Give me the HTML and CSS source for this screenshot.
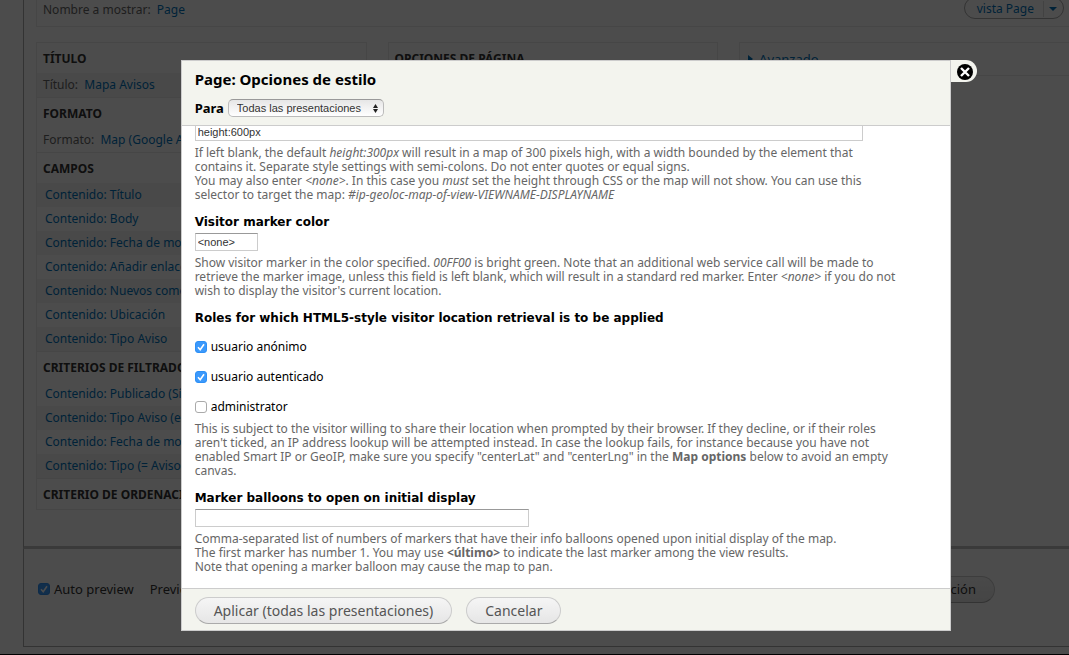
FILE: index.html
```html
<!DOCTYPE html>
<html lang="es">
<head>
<meta charset="utf-8">
<meta name="viewport" content="width=device-width, initial-scale=1">
<title>Page: Opciones de estilo</title>
<link rel="stylesheet" href="styles.css">
</head>
<body>
<main class="page">
  <div class="view-edit">
    <section class="display-top">
      <div>Nombre a mostrar: &nbsp;<a href="#">Page</a></div>
      <div class="dropbutton">
        <a href="#">vista Page</a>
        <button type="button" aria-label="Más acciones"><svg width="8" height="4" viewBox="0 0 8 4"><path d="M0 0h8L4 4z" fill="currentColor"/></svg></button>
      </div>
    </section>
    <div class="columns">
      <div class="column">
        <section class="bucket"><h3>Título</h3>
          <div class="row shaded">Título: &nbsp;<a href="#">Mapa Avisos</a></div></section>
        <section class="bucket"><h3>Formato</h3>
          <div class="row">Formato: &nbsp;<a href="#">Map (Google API)</a></div></section>
        <section class="bucket striped-odd"><h3>Campos</h3>
          <a class="row item" href="#">Contenido: Título</a>
          <a class="row item shaded" href="#">Contenido: Body</a>
          <a class="row item" href="#">Contenido: Fecha de modificación</a>
          <a class="row item shaded" href="#">Contenido: Añadir enlace</a>
          <a class="row item" href="#">Contenido: Nuevos comentarios</a>
          <a class="row item shaded" href="#">Contenido: Ubicación</a>
          <a class="row item" href="#">Contenido: Tipo Aviso</a></section>
        <section class="bucket"><h3>Criterios de filtrado</h3>
          <a class="row item" href="#">Contenido: Publicado (Sí)</a>
          <a class="row item shaded" href="#">Contenido: Tipo Aviso (expuesto)</a>
          <a class="row item" href="#">Contenido: Fecha de modificación</a>
          <a class="row item shaded" href="#">Contenido: Tipo (= Aviso)</a></section>
        <section class="bucket"><h3>Criterio de ordenación</h3></section>
      </div>
      <div class="column"><section class="bucket"><h3>Opciones de página</h3></section></div>
      <div class="column column-last"><a class="advanced" href="#"><svg width="5" height="8" viewBox="0 0 5 8"><path d="M0 0v8l5-4z" fill="currentColor"/></svg>Avanzado</a></div>
    </div>
  </div>
  <div class="preview">
    <label class="auto"><input class="tick" type="checkbox" checked>Auto preview</label>
    <span class="preview-text">Preview with contextual filters:</span>
    <button class="button small" type="button">Actualizar previsualización</button>
  </div>
</main>
<div class="overlay"></div>
<div class="dialog" role="dialog" aria-labelledby="dialog-title">
  <button class="close" type="button" aria-label="Cerrar"><svg width="16" height="16" viewBox="0 0 16 16"><circle cx="8" cy="8" r="8" fill="#000"/><path d="M4 4l8 8M12 4l-8 8" stroke="#fff" stroke-width="2.400"/></svg></button>
  <header class="dialog-head">
    <h1 id="dialog-title">Page: Opciones de estilo</h1>
    <div class="for"><label for="para">Para</label>
      <span class="select"><select id="para"><option>Todas las presentaciones</option></select><svg width="5" height="9" viewBox="0 0 5 9"><path d="M0 4h5L2.500 0zM0 5h5L2.500 9z" fill="#222"/></svg></span></div>
  </header>
  <div class="dialog-body">
    <div class="scrolled">
      <input class="text wide" type="text" value="height:600px" aria-label="Map style">
      <p>If left blank, the default <em>height:300px</em> will result in a map of 300 pixels high, with a width bounded by the element that<br>contains it. Separate style settings with semi-colons. Do not enter quotes or equal signs.<br>You may also enter <em>&lt;none&gt;</em>. In this case you <em>must</em> set the height through CSS or the map will not show. You can use this<br>selector to target the map: <em>#ip-geoloc-map-of-view-VIEWNAME-DISPLAYNAME</em></p>
      <label class="title" for="color">Visitor marker color</label>
      <input class="text short" id="color" type="text" value="&lt;none&gt;">
      <p>Show visitor marker in the color specified. <em>00FF00</em> is bright green. Note that an additional web service call will be made to<br>retrieve the marker image, unless this field is left blank, which will result in a standard red marker. Enter <em>&lt;none&gt;</em> if you do not<br>wish to display the visitor's current location.</p>
      <fieldset>
        <legend class="title">Roles for which HTML5-style visitor location retrieval is to be applied</legend>
        <label class="check"><input class="tick" type="checkbox" checked>usuario anónimo</label>
        <label class="check"><input class="tick" type="checkbox" checked>usuario autenticado</label>
        <label class="check"><input class="tick" type="checkbox">administrator</label>
      </fieldset>
      <p class="roles-help">This is subject to the visitor willing to share their location when prompted by their browser. If they decline, or if their roles<br>aren't ticked, an IP address lookup will be attempted instead. In case the lookup fails, for instance because you have not<br>enabled Smart IP or GeoIP, make sure you specify "centerLat" and "centerLng" in the <strong>Map options</strong> below to avoid an empty<br>canvas.</p>
      <label class="title" for="balloons">Marker balloons to open on initial display</label>
      <input class="text medium" id="balloons" type="text">
      <p>Comma-separated list of numbers of markers that have their info balloons opened upon initial display of the map.<br>The first marker has number 1. You may use <strong>&lt;último&gt;</strong> to indicate the last marker among the view results.<br>Note that opening a marker balloon may cause the map to pan.</p>
    </div>
  </div>
  <footer class="dialog-foot">
    <button class="button" type="button">Aplicar (todas las presentaciones)</button>
    <button class="button" type="button">Cancelar</button>
  </footer>
</div>
</body>
</html>
```
FILE: styles.css
```css
* { box-sizing: border-box; }
body {
  margin: 0;
  overflow: hidden;
  background: #fff;
  color: #666;
  font: 12px/14px "Noto Sans", "Open Sans", sans-serif;
}
a { color: #0074bd; text-decoration: none; }
h1, h3, p, fieldset { margin: 0; padding: 0; border: 0; }
button, input, select { font: inherit; margin: 0; }

.page { border-bottom: 1px solid #000; padding: 0 0 7px 23px; }
.view-edit {
  border-left: 1px solid #aaa;
  border-bottom: 3px solid #c4c4c4;
  padding: 0 0 36px 12px;
}
.display-top {
  display: flex;
  justify-content: space-between;
  height: 27px;
  padding: 3px 5px 0 6px;
  border: solid #ebebeb;
  border-width: 0 0 1px 1px;
}
.dropbutton {
  display: flex;
  align-items: center;
  height: 22px;
  margin-top: -6px;
  padding-top: 2px;
  border: 1px solid #aaa;
  border-radius: 11px;
}
.dropbutton a { padding: 0 9px 0 12px; }
.dropbutton button {
  display: flex;
  align-items: center;
  height: 16px;
  padding: 0 6px 0 5px;
  border: 0;
  border-left: 1px solid #ddd;
  background: none;
  color: #0074bd;
}
.columns { display: grid; grid-template-columns: 32% 32% 1fr; gap: 21px; padding-top: 15px; align-items: start; }
.column { border: 1px solid #ebebeb; min-width: 0; }
.column-last { border-right: 0; }
.bucket { border-bottom: 1px solid #ebebeb; }
.bucket:last-child { border-bottom: 0; }
.bucket h3 {
  padding: 9px 6px 7px;
  color: #333;
  font-size: 12px;
  line-height: 14px;
  text-transform: uppercase;
  white-space: nowrap;
}
.row { display: block; padding: 5px 6px; white-space: nowrap; overflow: hidden; }
.item { padding-left: 8px; }
.shaded, .striped-odd .item { background: #f3f3f3; }
.striped-odd .shaded { background: none; }
.advanced { display: flex; align-items: center; gap: 6px; padding: 9px 8px; font-size: 13px; }

.preview {
  display: flex;
  align-items: center;
  height: 98px;
  padding: 0 74px 17px 14px;
  border-left: 1px solid #aaa;
  border-bottom: 1px solid #aaa;
  color: #333;
  font-size: 13px;
}
.preview-text { padding-left: 16px; }
.preview .button { margin-left: auto; }
.auto, .check { display: flex; align-items: center; gap: 4px; }

.overlay { position: absolute; inset: 0; background: rgba(0, 0, 0, .7); }

.dialog {
  position: absolute;
  top: 60px;
  left: 16.9%;
  width: 72.1%;
  border: 1px solid #ccc;
  background: #fff;
}
.close {
  position: absolute;
  top: -1px;
  left: 100%;
  display: flex;
  align-items: center;
  height: 22px;
  padding: 1px 4px 0 6px;
  border: 0;
  border-left: 1px solid #ccc;
  border-radius: 0 11px 11px 0;
  background: #f3f4ee;
}
.dialog-head { padding: 8px 13px; background: #f3f4ee; border-bottom: 1px solid #ccc; color: #000; }
h1 { font-size: 15px; line-height: 20px; }
.for { display: flex; align-items: center; gap: 4px; padding-top: 10px; font-size: 13px; line-height: 18px; font-weight: bold; }
.select { position: relative; display: flex; }
.select svg { position: absolute; right: 6px; top: 5px; }
select {
  appearance: none;
  height: 18px;
  padding: 0 21px 0 8px;
  border: 1px solid #bbb;
  border-top-color: #999;
  border-radius: 5px;
  background: linear-gradient(#e6e6e6, #fff);
  color: #333;
  font: 11px/16px "Liberation Sans", Arial, sans-serif;
}
.dialog-body { overflow: hidden; }
.scrolled { margin-top: -3px; padding: 0 13px 14px; }
.text {
  display: block;
  height: 18px;
  padding: 0 2px;
  border: 1px solid #ccc;
  border-top-color: #999;
  background: #fff;
  color: #333;
  font: 11px/16px "Liberation Sans", Arial, sans-serif;
}
.wide { width: 90%; }
.medium { width: 45%; }
.short { width: 63px; }
p { padding-top: 5px; white-space: nowrap; }
.title { display: block; padding: 12px 0 3px; color: #000; font: bold 12px/16px "DejaVu Sans", sans-serif; }
.check { height: 18px; margin-top: 12px; color: #000; }
.check:first-of-type { margin-top: 9px; }
.roles-help { padding-top: 6px; }
.tick {
  appearance: none;
  width: 12px;
  height: 12px;
  border: 1px solid #aaa;
  border-radius: 3px;
  background: #fff;
}
.tick:checked {
  border-color: #2d8ff5;
  background: #3b99fc url("data:image/svg+xml,%3Csvg xmlns='http://www.w3.org/2000/svg' viewBox='0 0 10 10'%3E%3Cpath d='M2 5.300L4.200 7.700L8 2.300' fill='none' stroke='white' stroke-width='1.600'/%3E%3C/svg%3E");
}
.dialog-foot { display: flex; gap: 14px; padding: 8px 13px 6px; background: #f3f4ee; border-top: 1px solid #ccc; }
.button {
  height: 27px;
  padding: 0 18px;
  border: 1px solid #ccc;
  border-bottom-color: #aaa;
  border-radius: 14px;
  background: linear-gradient(#f5f5f5, #e6e6e6);
  color: #555;
  font-size: 14px;
  line-height: 20px;
}
.small { font-size: 13px; color: #333; }
```
